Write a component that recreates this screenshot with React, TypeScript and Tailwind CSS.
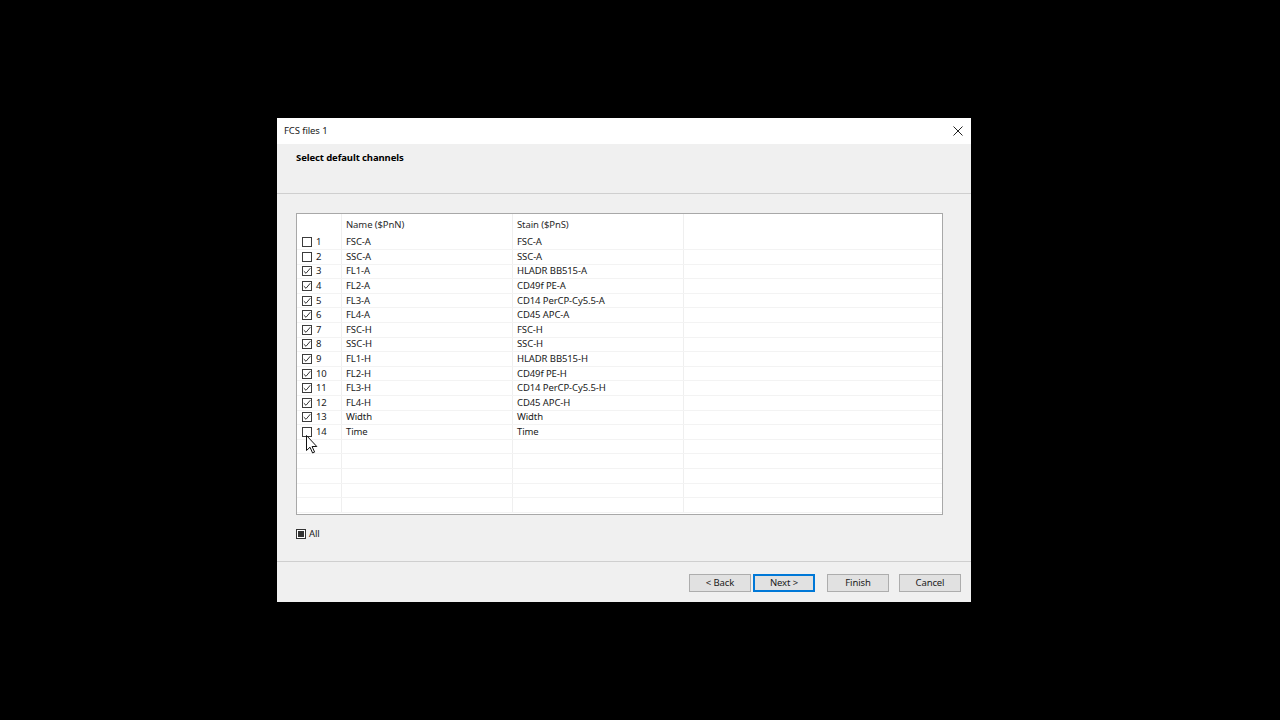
import React from "react";

const channels = [
  { n: 1, name: "FSC-A", stain: "FSC-A", on: false },
  { n: 2, name: "SSC-A", stain: "SSC-A", on: false },
  { n: 3, name: "FL1-A", stain: "HLADR BB515-A", on: true },
  { n: 4, name: "FL2-A", stain: "CD49f PE-A", on: true },
  { n: 5, name: "FL3-A", stain: "CD14 PerCP-Cy5.5-A", on: true },
  { n: 6, name: "FL4-A", stain: "CD45 APC-A", on: true },
  { n: 7, name: "FSC-H", stain: "FSC-H", on: true },
  { n: 8, name: "SSC-H", stain: "SSC-H", on: true },
  { n: 9, name: "FL1-H", stain: "HLADR BB515-H", on: true },
  { n: 10, name: "FL2-H", stain: "CD49f PE-H", on: true },
  { n: 11, name: "FL3-H", stain: "CD14 PerCP-Cy5.5-H", on: true },
  { n: 12, name: "FL4-H", stain: "CD45 APC-H", on: true },
  { n: 13, name: "Width", stain: "Width", on: true },
  { n: 14, name: "Time", stain: "Time", on: false },
];

const Check = ({ on }: { on: boolean }) => (
  <span className="w-[10px] h-[10px] border border-[#3c3c3c] bg-white flex items-center justify-center shrink-0">
    {on && (
      <svg width="8" height="8" viewBox="0 0 8 8">
        <polyline points="0.8,4.2 3,6.3 7.3,1.2" fill="none" stroke="#333333" strokeWidth="1" />
      </svg>
    )}
  </span>
);

const Btn = ({ label, focused }: { label: string; focused?: boolean }) => (
  <button
    className={
      "w-[62px] h-[18px] text-[9.5px] leading-none text-[#1a1a1a] bg-[#e1e1e1] flex items-center justify-center " +
      (focused ? "border border-[#0078d7] shadow-[inset_0_0_0_1px_#0078d7]" : "border border-[#adadad]")
    }
  >
    {label}
  </button>
);

export default function App() {
  const empty = Array.from({ length: 5 });
  return (
    <div
      className="w-[1280px] h-[720px] bg-black pl-[277px] pt-[118px] text-[9.5px] leading-[12px] tracking-[-0.1px] text-[#1a1a1a]"
      style={{ fontFamily: '"Noto Sans", "Open Sans", sans-serif' }}
    >
      <div className="w-[694px] h-[484px] bg-[#f0f0f0] flex flex-col">
        {/* title bar */}
        <div className="h-[26px] bg-white flex items-center justify-between pl-[7px] pr-[8px] shrink-0">
          <span>FCS files 1</span>
          <svg width="10" height="10" viewBox="0 0 10 10">
            <path d="M0.5,0.5 L9.5,9.5 M9.5,0.5 L0.5,9.5" stroke="#222" strokeWidth="1" />
          </svg>
        </div>

        {/* header */}
        <div className="h-[50px] border-b border-[#cfcfcf] pl-[19px] pt-[8px] shrink-0">
          <div className="font-bold text-black h-[12px] flex items-center">Select default channels</div>
        </div>

        {/* body */}
        <div className="pl-[19px] pt-[19px] shrink-0">
          <div className="relative w-[647px] h-[302px] bg-white border border-[#a8a8a8] flex flex-col">
            <div className="h-[21.5px] flex shrink-0 text-[#2a2a2a]">
              <div className="w-[45px] border-r border-[#efefef]" />
              <div className="w-[171px] border-r border-[#efefef] pl-[4px] flex items-center">Name ($PnN)</div>
              <div className="w-[171px] border-r border-[#efefef] pl-[4px] flex items-center">Stain ($PnS)</div>
              <div className="flex-1" />
            </div>
            {channels.map((c) => (
              <div key={c.n} className="h-[14.6px] flex shrink-0 border-b border-[#f3f3f3]">
                <div className="w-[45px] border-r border-[#efefef] pl-[5px] flex items-center gap-[4px]">
                  <Check on={c.on} />
                  <span>{c.n}</span>
                </div>
                <div className="w-[171px] border-r border-[#efefef] pl-[4px] flex items-center">{c.name}</div>
                <div className="w-[171px] border-r border-[#efefef] pl-[4px] flex items-center">{c.stain}</div>
                <div className="flex-1" />
              </div>
            ))}
            {empty.map((_, i) => (
              <div key={i} className="h-[14.6px] flex shrink-0 border-b border-[#f3f3f3]">
                <div className="w-[45px] border-r border-[#efefef]" />
                <div className="w-[171px] border-r border-[#efefef]" />
                <div className="w-[171px] border-r border-[#efefef]" />
                <div className="flex-1" />
              </div>
            ))}
            {/* mouse pointer */}
            <svg className="absolute left-[9px] top-[221px]" width="12" height="19" viewBox="0 0 12 19">
              <path
                d="M0.5,0.5 L0.5,15.5 L4,12.2 L6.6,18 L8.6,17.1 L6.1,11.5 L10.8,11.5 Z"
                fill="white"
                stroke="#111"
                strokeWidth="1"
                strokeLinejoin="round"
              />
            </svg>
          </div>

          <div className="mt-[14px] flex items-center gap-[3px] h-[10px]">
            <span className="w-[10px] h-[10px] border border-[#333333] bg-white flex items-center justify-center">
              <span className="w-[6px] h-[6px] bg-[#333333]" />
            </span>
            <span>All</span>
          </div>
        </div>

        <div className="flex-1" />

        {/* footer */}
        <div className="border-t border-[#cfcfcf] pt-[12px] pb-[10px] pr-[10px] flex justify-end shrink-0">
          <div className="flex gap-[2px]">
            <Btn label="< Back" />
            <Btn label="Next >" focused />
          </div>
          <div className="ml-[12px]">
            <Btn label="Finish" />
          </div>
          <div className="ml-[10px]">
            <Btn label="Cancel" />
          </div>
        </div>
      </div>
    </div>
  );
}
